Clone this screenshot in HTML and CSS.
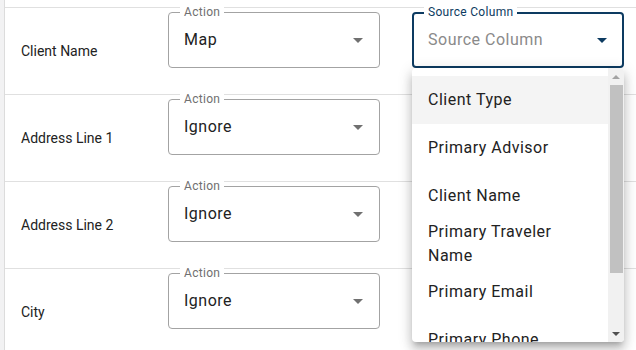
FILE: index.html
```html
<!DOCTYPE html>
<html lang="en">
<head>
    <meta charset="UTF-8">
    <meta name="viewport" content="width=device-width, initial-scale=1.0">
    <title>Column Mapping</title>
    <link rel="stylesheet" href="styles.css">
</head>
<body>

<div class="page">
    <div class="rail"></div>

    <div class="mapping-table">
        <div class="mapping-row">
            <div class="field-name">Client Name</div>
            <div class="select">
                <span class="select-label">Action</span>
                <span class="select-value">Map</span>
                <span class="caret"></span>
            </div>
            <div class="select select-focused source">
                <span class="select-label">Source Column</span>
                <span class="select-value placeholder">Source Column</span>
                <span class="caret"></span>

                <div class="menu">
                    <ul class="menu-list">
                        <li class="menu-item active">Client Type</li>
                        <li class="menu-item">Primary Advisor</li>
                        <li class="menu-item">Client Name</li>
                        <li class="menu-item">Primary Traveler Name</li>
                        <li class="menu-item">Primary Email</li>
                        <li class="menu-item">Primary Phone</li>
                        <li class="menu-item">Address Line 1</li>
                    </ul>
                    <div class="scrollbar">
                        <div class="scroll-btn"><span class="arrow-up"></span></div>
                        <div class="scroll-thumb"></div>
                        <div class="scroll-space"></div>
                        <div class="scroll-btn"><span class="arrow-down"></span></div>
                    </div>
                </div>
            </div>
        </div>

        <div class="mapping-row">
            <div class="field-name">Address Line 1</div>
            <div class="select">
                <span class="select-label">Action</span>
                <span class="select-value">Ignore</span>
                <span class="caret"></span>
            </div>
        </div>

        <div class="mapping-row">
            <div class="field-name">Address Line 2</div>
            <div class="select">
                <span class="select-label">Action</span>
                <span class="select-value">Ignore</span>
                <span class="caret"></span>
            </div>
        </div>

        <div class="mapping-row">
            <div class="field-name">City</div>
            <div class="select">
                <span class="select-label">Action</span>
                <span class="select-value">Ignore</span>
                <span class="caret"></span>
            </div>
        </div>
    </div>
</div>

</body>
</html>
```

FILE: styles.css
```css
:root {
    --primary: #0d3b61;
    --row-line: #e0e0e0;
    --outline: #a3a3a3;
}

body {
    margin: 0;
    background-color: #ffffff;
    font-family: Roboto, 'Liberation Sans', sans-serif;
    color: #212121;
    overflow: hidden;
}

.page {
    display: flex;
    min-height: 100vh;
}

.rail {
    width: 4px;
    flex-shrink: 0;
    background-color: #f2f2f3;
    border-right: 1px solid #dcdcdc;
}

.mapping-table {
    flex: 1;
    padding-top: 7px;
}

.mapping-row {
    display: flex;
    align-items: flex-start;
    height: 87px;
    box-sizing: border-box;
    border-top: 1px solid var(--row-line);
}

.field-name {
    width: 147px;
    flex-shrink: 0;
    align-self: center;
    padding-left: 16px;
    font-size: 14px;
    line-height: 20px;
    color: #222;
}

/* Outlined select */
.select {
    position: relative;
    display: flex;
    align-items: center;
    width: 212px;
    height: 56px;
    flex-shrink: 0;
    margin-top: 4px;
    box-sizing: border-box;
    padding: 0 16px 0 15px;
    border: 1px solid var(--outline);
    border-radius: 4px;
}

.select-label {
    position: absolute;
    top: -8px;
    left: 11px;
    padding: 0 4px;
    background-color: #ffffff;
    font-size: 12px;
    line-height: 14px;
    letter-spacing: 0.3px;
    color: #707070;
}

.select-value {
    font-size: 16px;
    line-height: 24px;
    letter-spacing: 0.5px;
    color: #222;
}

.caret {
    margin-left: auto;
    width: 0;
    height: 0;
    border-left: 5px solid transparent;
    border-right: 5px solid transparent;
    border-top: 5px solid #707070;
}

.source {
    margin-left: 32px;
}

.select-focused {
    border: 2px solid var(--primary);
    padding: 0 15px 0 14px;
}

.select-focused .select-label {
    top: -9px;
    left: 10px;
    color: var(--primary);
}

.select-focused .caret {
    border-top-color: var(--primary);
}

.placeholder {
    color: #8a8a8a;
}

/* Dropdown menu */
.menu {
    position: absolute;
    top: 54px;
    left: -2px;
    right: -2px;
    height: 274px;
    z-index: 10;
    display: flex;
    background-color: #ffffff;
    border-radius: 4px;
    overflow: hidden;
    box-shadow: 0 5px 5px -3px rgba(0, 0, 0, 0.2),
                0 8px 10px 1px rgba(0, 0, 0, 0.14),
                0 3px 14px 2px rgba(0, 0, 0, 0.12);
}

.menu-list {
    flex: 1;
    list-style: none;
    margin: 0;
    padding: 8px 0 0;
    overflow: hidden;
}

.menu-item {
    display: flex;
    align-items: center;
    min-height: 48px;
    padding: 0 16px;
    font-size: 16px;
    line-height: 24px;
    letter-spacing: 0.5px;
    color: #222;
}

.menu-item.active {
    background-color: #f4f4f4;
}

.scrollbar {
    width: 16px;
    flex-shrink: 0;
    display: flex;
    flex-direction: column;
    background-color: #f1f1f1;
}

.scroll-btn {
    height: 17px;
    display: flex;
    justify-content: center;
    align-items: center;
}

.arrow-up {
    width: 0;
    height: 0;
    border-left: 4px solid transparent;
    border-right: 4px solid transparent;
    border-bottom: 4px solid #a3a3a3;
}

.arrow-down {
    width: 0;
    height: 0;
    border-left: 4px solid transparent;
    border-right: 4px solid transparent;
    border-top: 4px solid #505050;
}

.scroll-thumb {
    height: 188px;
    margin: 0 1px 0 2px;
    background-color: #c1c1c1;
}

.scroll-space {
    flex: 1;
}
```
